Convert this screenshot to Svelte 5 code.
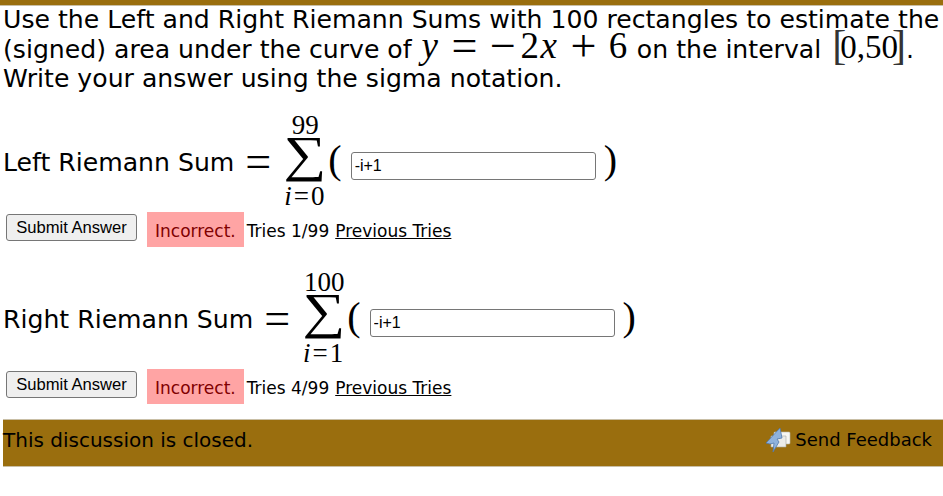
<script>
  const parts = [
    { label: "Left Riemann Sum", top: "99", low: "0", value: "-i+1", tries: "Tries 1/99" },
    { label: "Right Riemann Sum", top: "100", low: "1", value: "-i+1", tries: "Tries 4/99" }
  ];
</script>

<div class="topbar"></div>
<div class="problem">
  <p class="intro">
    Use the Left and Right Riemann Sums with 100 rectangles to estimate the<br />
    (signed) area under the curve of <span class="math inl"><i>y</i><span class="op">=</span><span class="op minus">−</span>2<i>x</i><span class="op">+</span>6</span> on the interval <span class="math ivl"><span class="br open">[</span>0,50<span class="br shut">]</span></span>.<br />
    Write your answer using the sigma notation.
  </p>

  {#each parts as part}
    <div class="part">
      <div class="formula">
        <span class="label">{part.label}</span>
        <span class="math eq">=</span>
        <span class="sum math">
          <span class="limit">{part.top}</span>
          <span class="sigma">∑</span>
          <span class="limit low"><i>i</i>={part.low}</span>
        </span>
        <span class="paren math">(</span>
        <input type="text" value={part.value} />
        <span class="paren math close">)</span>
      </div>
      <div class="actions">
        <button>Submit Answer</button>
        <span class="incorrect">Incorrect.</span>
        <span class="tries">{part.tries}</span>
        <span class="prev">Previous Tries</span>
      </div>
    </div>
  {/each}
</div>

<div class="footer">
  <span>This discussion is closed.</span>
  <span class="feedback">
    <svg width="26" height="28" viewBox="0 0 26 28">
      <rect x="9" y="6" width="16" height="12" rx="1" fill="#f7f7f3" stroke="#b8b8b0" stroke-width=".6" />
      <path d="M6 10h15v11H6z" fill="#ecece8" stroke="#a9a9a2" stroke-width=".6" />
      <path d="M1 17 15 2l2 10-5 1 2 3-6 10 1-9-4 1z" fill="#8fb2dd" stroke="#4f79ad" stroke-width=".8" />
    </svg>
    Send Feedback
  </span>
</div>

<style>
  :global(body) {
    margin: 0;
    background: #fff;
    font-family: "DejaVu Sans", Verdana, sans-serif;
    color: #000;
  }
  .topbar {
    height: 5px;
    background: #9a6e0e;
    border-bottom: 1px solid #c9bfa6;
  }
  .problem {
    padding-left: 3px;
  }
  .intro {
    margin: -1px 0 0;
    font-size: 25.15px;
    line-height: 29.5px;
    white-space: nowrap;
  }
  .math {
    font-family: "Liberation Serif", "DejaVu Serif", serif;
    line-height: 0;
  }
  .inl {
    font-size: 37px;
    margin-left: 2px;
    letter-spacing: 1.5px;
  }
  .op {
    font-size: 46px;
    margin: 0 11px 0 12px;
    vertical-align: -3px;
  }
  .minus {
    margin: 0 3px 0 0;
  }
  .ivl {
    font-size: 33px;
    margin-left: 3px;
  }
  .br {
    font-size: 42px;
    font-weight: 200;
    color: #333;
    vertical-align: -1px;
  }
  .open {
    margin-right: -6px;
  }
  .shut {
    margin-left: -6px;
  }
  .formula {
    display: flex;
    align-items: center;
    height: 99px;
    margin-top: 19px;
  }
  .part + .part .formula {
    margin-top: 23px;
  }
  .label {
    font-size: 25.15px;
  }
  .eq {
    font-size: 46px;
    margin: 0 11px;
  }
  .sum {
    display: flex;
    flex-direction: column;
    align-items: center;
    width: 46px;
  }
  .limit {
    font-size: 27px;
    line-height: 26px;
    transform: translateY(-1px);
  }
  .low {
    letter-spacing: 2px;
    transform: translateY(-2px);
  }
  .sigma {
    font-size: 50px;
    line-height: 46px;
    transform: translateY(-8px) scaleX(1.2);
  }
  .paren {
    font-size: 40px;
    font-weight: 200;
    transform: translateY(-2px);
  }
  input {
    box-sizing: border-box;
    width: 245px;
    height: 28px;
    margin: 7px 8px 0 9px;
    padding: 0 3px;
    border: 1px solid #767676;
    border-radius: 3px;
    font: 16px "Liberation Sans", Arial, sans-serif;
  }
  .actions {
    display: flex;
    align-items: center;
    height: 35px;
    padding-left: 3px;
    font-size: 17px;
  }
  button {
    box-sizing: border-box;
    width: 131px;
    height: 27px;
    margin: -3px 10px 0 0;
    padding: 0;
    border: 1px solid #767676;
    border-radius: 3px;
    background: #efefef;
    font: 16.6px "Liberation Sans", Arial, sans-serif;
  }
  .incorrect {
    display: flex;
    align-items: center;
    box-sizing: border-box;
    height: 35px;
    padding: 3px 8px 0;
    background: #ffa4a4;
    color: #800000;
    margin-right: 3px;
  }
  .tries,
  .prev {
    margin-top: 3px;
  }
  .prev {
    margin-left: 6px;
    text-decoration: underline;
  }
  .footer {
    display: flex;
    justify-content: space-between;
    align-items: center;
    box-sizing: border-box;
    height: 48px;
    margin: 15px 0 0 3px;
    padding: 0 11px 6px 0;
    background: #9a6e0e;
    border-top: 1px solid #c9bfa6;
    border-bottom: 1px solid #c9bfa6;
    font-size: 20px;
  }
  .feedback {
    display: flex;
    align-items: center;
    gap: 4px;
    font-size: 18px;
  }
</style>
